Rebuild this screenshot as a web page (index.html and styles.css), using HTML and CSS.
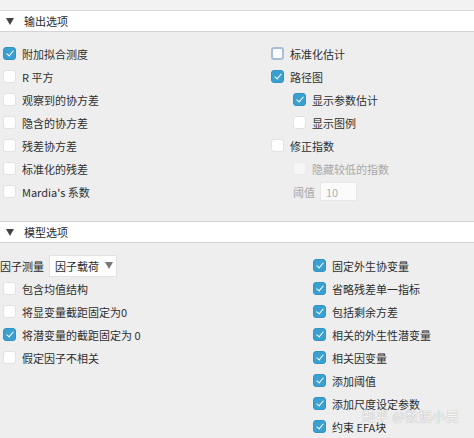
FILE: index.html
```html
<!DOCTYPE html>
<html>
<head>
<meta charset="utf-8">
<link rel="stylesheet" href="styles.css">
</head>
<body>
<div class="page">
  <div class="topstrip"></div>
  <div class="sec-head"><span class="tri"></span>输出选项</div>
  <div class="sec-body sec1">
    <div class="col col-l1">
      <div class="row"><span class="cb on"></span>附加拟合测度</div>
      <div class="row"><span class="cb"></span>R 平方</div>
      <div class="row"><span class="cb"></span>观察到的协方差</div>
      <div class="row"><span class="cb"></span>隐含的协方差</div>
      <div class="row"><span class="cb"></span>残差协方差</div>
      <div class="row"><span class="cb"></span>标准化的残差</div>
      <div class="row"><span class="cb"></span>Mardia's 系数</div>
    </div>
    <div class="col">
      <div class="row"><span class="cb focus"></span>标准化估计</div>
      <div class="row"><span class="cb on"></span>路径图</div>
      <div class="row sub"><span class="cb on"></span>显示参数估计</div>
      <div class="row sub"><span class="cb"></span>显示图例</div>
      <div class="row"><span class="cb"></span>修正指数</div>
      <div class="row sub dis"><span class="cb dim"></span>隐藏较低的指数</div>
      <div class="row sub dis thr"><span class="lbl">阈值</span><span class="inp">10</span></div>
    </div>
  </div>
  <div class="sec-head"><span class="tri"></span>模型选项</div>
  <div class="sec-body sec2">
    <div class="col col-l2">
      <div class="row meas">因子测量<span class="dd">因子载荷<span class="dtri"></span></span></div>
      <div class="row"><span class="cb"></span>包含均值结构</div>
      <div class="row"><span class="cb"></span>将显变量截距固定为0</div>
      <div class="row"><span class="cb on"></span>将潜变量的截距固定为 0</div>
      <div class="row"><span class="cb"></span>假定因子不相关</div>
    </div>
    <div class="col">
      <div class="row"><span class="cb on"></span>固定外生协变量</div>
      <div class="row"><span class="cb on"></span>省略残差单一指标</div>
      <div class="row"><span class="cb on"></span>包括剩余方差</div>
      <div class="row"><span class="cb on"></span>相关的外生性潜变量</div>
      <div class="row"><span class="cb on"></span>相关因变量</div>
      <div class="row"><span class="cb on"></span>添加阈值</div>
      <div class="row"><span class="cb on"></span>添加尺度设定参数</div>
      <div class="row"><span class="cb on"></span>约束 EFA块</div>
    </div>
    <div class="wm">知乎 @数据小吴</div>
  </div>
</div>
</body>
</html>
```

FILE: styles.css
```css
html, body {
  margin: 0;
  padding: 0;
}
body {
  width: 474px;
  height: 438px;
  overflow: hidden;
  background: #eeeeee;
  font-family: "Noto Sans CJK SC", "Noto Sans", sans-serif;
  font-size: 11px;
  color: #2e2e2e;
}
.page {
  display: flex;
  flex-direction: column;
}
.topstrip {
  height: 10px;
  background: #f2f2f2;
  border-bottom: 1px solid #d8d8d8;
}
.sec-head {
  height: 20px;
  background: #ffffff;
  border-bottom: 1px solid #d4d4d4;
  display: flex;
  align-items: center;
  padding-left: 6px;
  color: #2a2a2a;
}
.tri {
  width: 0;
  height: 0;
  border-left: 4px solid transparent;
  border-right: 4px solid transparent;
  border-top: 7px solid #444;
  margin-right: 10px;
}
.sec-body {
  position: relative;
  display: flex;
  background: #eeeeee;
}
.sec1 {
  padding: 10px 0 18px 3px;
  border-bottom: 1px solid #d4d4d4;
}
.sec2 {
  padding: 11px 0 0 0;
  height: 185px;
}
.col {
  display: flex;
  flex-direction: column;
}
.col-l1 { width: 268px; }
.col-l2 { width: 313px; }
.row {
  height: 23px;
  display: flex;
  align-items: center;
  white-space: nowrap;
}
.sub { padding-left: 22px; }
.dis { color: #a8a8a8; }
.cb {
  width: 13px;
  height: 13px;
  box-sizing: border-box;
  border-radius: 3px;
  background: #ffffff;
  border: 1px solid #e2e2e2;
  margin-right: 6px;
  flex: none;
  position: relative;
}
.cb.on {
  background: #3aa0d0;
  border-color: #3394c4;
}
.cb.on::after {
  content: "";
  position: absolute;
  left: 3.5px;
  top: 1px;
  width: 3px;
  height: 6px;
  border-right: 1.7px solid #fff;
  border-bottom: 1.7px solid #fff;
  transform: rotate(40deg);
}
.cb.focus {
  border: 2px solid #a6bfd9;
  background: #fafcff;
}
.cb.dim {
  background: #f6f6f6;
  border-color: #ececec;
}
.col-l2 .cb { margin-left: 3px; }
.meas { padding-left: 0; color: #2a2a2a; }
.dd {
  margin-left: 5px;
  height: 22px;
  width: 68px;
  box-sizing: border-box;
  background: #fdfdfd;
  border: 1px solid #e2e2e2;
  display: flex;
  align-items: center;
  padding-left: 5px;
}
.dtri {
  width: 0;
  height: 0;
  border-left: 4px solid transparent;
  border-right: 4px solid transparent;
  border-top: 7px solid #777;
  margin-left: 6px;
}
.thr .lbl { margin-left: 0; }
.inp {
  margin-left: 5px;
  width: 37px;
  height: 19px;
  box-sizing: border-box;
  background: #fbfbfb;
  border: 1px solid #e8e8e8;
  display: flex;
  align-items: center;
  padding-left: 5px;
  color: #b0b0b0;
}
.wm {
  position: absolute;
  left: 362px;
  top: 164px;
  font-size: 13px;
  line-height: 18px;
  color: rgba(255,255,255,0.85);
  text-shadow: 0 0 1px #b8b8b8, 0 0 1px #b8b8b8;
  letter-spacing: 0.5px;
}
```
